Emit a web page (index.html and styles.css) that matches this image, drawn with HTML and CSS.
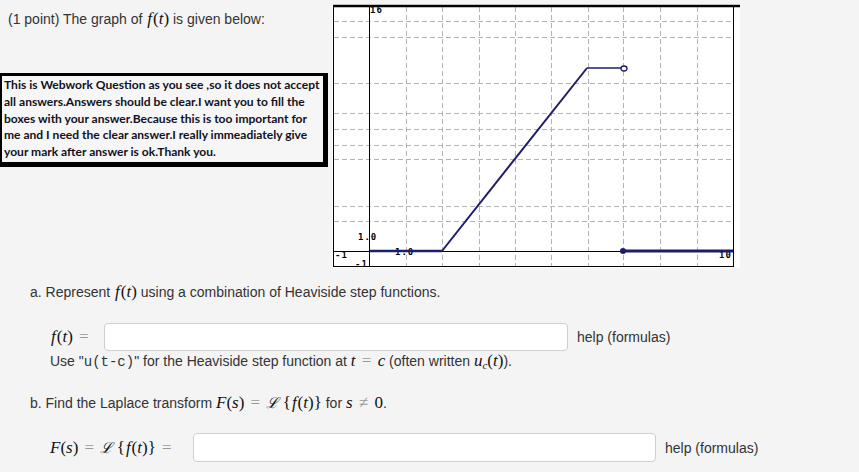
FILE: index.html
```html
<!DOCTYPE html>
<html>
<head>
<meta charset="utf-8">
<link rel="stylesheet" href="styles.css">
</head>
<body>
<div class="top">
  <div class="left">
    <p class="intro">(1 point) The graph of <span class="m"><i class="f">f</i>(<i>t</i>)</span> is given below:</p>
    <div class="notice">This is Webwork Question as you see ,so it does not accept<br>all answers.Answers should be clear.I want you to fill the<br>boxes with your answer.Because this is too important for<br>me and I need the clear answer.I really immeadiately give<br>your mark after answer is ok.Thank you.</div>
  </div>
  <svg class="graph" width="408" height="264" viewBox="332 4 408 264">
    <rect x="332" y="4" width="408" height="264" fill="#fff"/>
    <g stroke="#b4b4b4" stroke-width="1" stroke-dasharray="5 3" fill="none">
      <line x1="406.5" y1="7" x2="406.5" y2="266"/>
      <line x1="442.5" y1="7" x2="442.5" y2="266"/>
      <line x1="479.5" y1="7" x2="479.5" y2="266"/>
      <line x1="515.5" y1="7" x2="515.5" y2="266"/>
      <line x1="551.5" y1="7" x2="551.5" y2="266"/>
      <line x1="588.5" y1="7" x2="588.5" y2="266"/>
      <line x1="623.5" y1="7" x2="623.5" y2="266"/>
      <line x1="660.5" y1="7" x2="660.5" y2="266"/>
      <line x1="697.5" y1="7" x2="697.5" y2="266"/>
      <line x1="334" y1="21.5" x2="733" y2="21.5"/>
      <line x1="334" y1="37.5" x2="733" y2="37.5"/>
      <line x1="334" y1="83.5" x2="733" y2="83.5"/>
      <line x1="334" y1="113.5" x2="733" y2="113.5"/>
      <line x1="334" y1="129.5" x2="733" y2="129.5"/>
      <line x1="334" y1="145.5" x2="733" y2="145.5"/>
      <line x1="334" y1="159.5" x2="733" y2="159.5"/>
      <line x1="334" y1="206.5" x2="733" y2="206.5"/>
      <line x1="334" y1="221.5" x2="733" y2="221.5"/>
    </g>
    <g class="lbl">
      <text x="370" y="13">16</text>
      <text x="358" y="240">1.0</text>
      <text x="395" y="255">1.0</text>
      <text x="335" y="258">-1</text>
      <text x="355" y="267">-1</text>
      <text x="719" y="258">10</text>
    </g>
    <g stroke="#000" fill="none">
      <line x1="369.5" y1="6" x2="369.5" y2="266"/>
      <line x1="333" y1="251.5" x2="733" y2="251.5"/>
      <line x1="333.5" y1="6" x2="333.5" y2="267"/>
      <line x1="733.5" y1="6" x2="733.5" y2="267"/>
      <line x1="333" y1="266.5" x2="734" y2="266.5"/>
      <line x1="333" y1="6" x2="740" y2="6" stroke-width="2.5"/>
    </g>
    <g stroke="#1d1d6b" fill="none" stroke-linejoin="round">
      <line x1="370" y1="251" x2="442" y2="251" stroke-width="2.5"/>
      <line x1="442" y1="251" x2="587" y2="68" stroke-width="2"/>
      <line x1="587" y1="68" x2="621" y2="68" stroke-width="1.3"/>
      <ellipse cx="624" cy="68.5" rx="3" ry="2.5" fill="#fff" stroke-width="1.3"/>
      <line x1="623" y1="251" x2="733" y2="251" stroke-width="3"/>
      <circle cx="623" cy="251" r="3" fill="#1d1d6b" stroke="none"/>
    </g>
  </svg>
</div>

<div class="parts">
  <p class="q">a. Represent <span class="m"><i class="f">f</i>(<i>t</i>)</span> using a combination of Heaviside step functions.</p>
  <div class="row">
    <span class="m lab"><i class="f">f</i>(<i>t</i>) <span class="eq">=</span></span>
    <span class="box box-a"></span>
    <span class="help">help (formulas)</span>
  </div>
  <p class="hint">Use "<code>u(t-c)</code>" for the Heaviside step function at <span class="m"><i>t</i> <span class="eq">=</span> <i>c</i></span> (often written <span class="m"><i>u<sub>c</sub></i>(<i>t</i>)</span>).</p>

  <p class="q qb">b. Find the Laplace transform <span class="m"><i>F</i>(<i>s</i>) <span class="eq">=</span> <span class="cal">ℒ</span> {<i class="f">f</i>(<i>t</i>)}</span> for <span class="m"><i>s</i> <span class="eq">≠</span> 0</span>.</p>
  <div class="row rowb">
    <span class="m lab"><i>F</i>(<i>s</i>) <span class="eq">=</span> <span class="cal">ℒ</span> {<i class="f">f</i>(<i>t</i>)} <span class="eq">=</span></span>
    <span class="box box-b"></span>
    <span class="help">help (formulas)</span>
  </div>
</div>
</body>
</html>
```

FILE: styles.css
```css
html, body {
  margin: 0;
  padding: 0;
  background: #f4f4f4;
}
body {
  font-family: "Liberation Sans", Arial, sans-serif;
  font-size: 14px;
  color: #333;
  width: 859px;
  height: 472px;
  overflow: hidden;
}
p { margin: 0; }

.top {
  display: flex;
  align-items: flex-start;
  height: 268px;
}
.left {
  width: 332px;
  flex: none;
}
.intro {
  margin: 11px 0 0 8px;
  line-height: 16px;
}
.notice {
  margin-top: 46px;
  width: 328px;
  box-sizing: border-box;
  border-style: solid;
  border-color: #000;
  border-width: 3px 5px 5px 2px;
  padding: 1px 0 1px 2px;
  font-family: Lato, "Open Sans", sans-serif;
  font-weight: 700;
  font-size: 12.05px;
  line-height: 16.8px;
  color: #111122;
  background: #f6f6f6;
  white-space: nowrap;
  overflow: hidden;
}
.graph {
  display: block;
  margin-top: 4px;
  flex: none;
}
.lbl text {
  font-family: "DejaVu Sans Mono", monospace;
  font-weight: 700;
  font-size: 9px;
  letter-spacing: 1px;
  fill: #000;
}

.m {
  font-family: "Liberation Serif", "DejaVu Serif", serif;
  font-size: 17px;
  color: #111;
}
.m i { font-style: italic; }
.m i.f { padding: 0 1px 0 1px; }
.m sub { font-size: 11px; vertical-align: -3px; line-height: 0; }
.eq { color: #999; padding: 0 2px; }
.cal { font-family: "DejaVu Serif", serif; font-style: italic; font-size: 15px; }

.parts {
  padding-left: 30px;
}
.q {
  margin-top: 15px;
  line-height: 18px;
  height: 18px;
}
.row {
  margin-top: 22px;
  margin-left: 20px;
  display: flex;
  align-items: center;
  height: 28px;
}
.lab {
  width: 54px;
  flex: none;
  white-space: nowrap;
}
.box {
  display: block;
  height: 28px;
  box-sizing: border-box;
  background: #fff;
  border: 1px solid #cfcfcf;
  border-radius: 4px;
  flex: none;
}
.box-a { width: 464px; }
.help {
  margin-left: 9px;
  color: #333;
}
.hint {
  margin: 1px 0 0 20px;
  line-height: 18px;
  height: 18px;
}
.hint code {
  font-family: "Liberation Mono", monospace;
  font-size: 14px;
}
.qb { margin-top: 24px; }
.rowb { margin-top: 21px; height: 29px; }
.rowb .lab { width: 143px; }
.rowb .box { height: 29px; }
.box-b { width: 463px; }
```
